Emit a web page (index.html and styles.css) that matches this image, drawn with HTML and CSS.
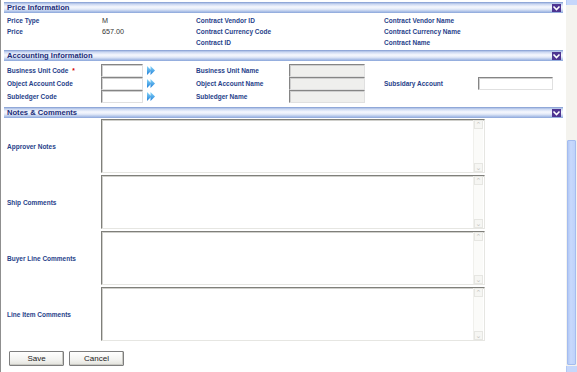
FILE: index.html
```html
<!DOCTYPE html>
<html>
<head>
<meta charset="utf-8">
<link rel="stylesheet" href="styles.css">
</head>
<body>
<div class="window">
  <div class="page">
    <div class="section-head">
      <span class="section-title">Price Information</span>
      <svg class="collapse" width="9" height="8" viewBox="0 0 9 8"><rect width="9" height="8" fill="#4e3592"/><path d="M1.5 2.5 L4.5 5.5 L7.5 2.5" fill="none" stroke="#fff" stroke-width="1.6"/></svg>
    </div>
    <div class="grid price">
      <span class="lbl">Price Type</span><span class="val">M</span><span class="lbl">Contract Vendor ID</span><span></span><span class="lbl">Contract Vendor Name</span><span></span>
      <span class="lbl">Price</span><span class="val">657.00</span><span class="lbl">Contract Currency Code</span><span></span><span class="lbl">Contract Currency Name</span><span></span>
      <span></span><span></span><span class="lbl">Contract ID</span><span></span><span class="lbl">Contract Name</span><span></span>
    </div>

    <div class="section-head">
      <span class="section-title">Accounting Information</span>
      <svg class="collapse" width="9" height="8" viewBox="0 0 9 8"><rect width="9" height="8" fill="#4e3592"/><path d="M1.5 2.5 L4.5 5.5 L7.5 2.5" fill="none" stroke="#fff" stroke-width="1.6"/></svg>
    </div>
    <div class="grid acct">
      <span class="lbl">Business Unit Code <span class="req">*</span></span>
      <span class="field"><input class="code" type="text"><svg class="go" width="8" height="9" viewBox="0 0 8 9"><defs><linearGradient id="g1" x1="0" y1="0" x2="0" y2="1"><stop offset="0" stop-color="#8ad8fb"/><stop offset="1" stop-color="#1f7fd8"/></linearGradient></defs><polygon points="0,0 4.5,4.5 0,9" fill="url(#g1)"/><polygon points="3.5,0 8,4.5 3.5,9" fill="url(#g1)"/></svg></span>
      <span class="lbl">Business Unit Name</span>
      <span class="field"><input class="name" type="text" disabled></span>
      <span></span><span></span>

      <span class="lbl">Object Account Code</span>
      <span class="field"><input class="code" type="text"><svg class="go" width="8" height="9" viewBox="0 0 8 9"><polygon points="0,0 4.5,4.5 0,9" fill="url(#g1)"/><polygon points="3.5,0 8,4.5 3.5,9" fill="url(#g1)"/></svg></span>
      <span class="lbl">Object Account Name</span>
      <span class="field"><input class="name" type="text" disabled></span>
      <span class="lbl">Subsidary Account</span>
      <span class="field"><input class="sub" type="text"></span>

      <span class="lbl">Subledger Code</span>
      <span class="field"><input class="code" type="text"><svg class="go" width="8" height="9" viewBox="0 0 8 9"><polygon points="0,0 4.5,4.5 0,9" fill="url(#g1)"/><polygon points="3.5,0 8,4.5 3.5,9" fill="url(#g1)"/></svg></span>
      <span class="lbl">Subledger Name</span>
      <span class="field"><input class="name" type="text" disabled></span>
      <span></span><span></span>
    </div>

    <div class="section-head">
      <span class="section-title">Notes &amp; Comments</span>
      <svg class="collapse" width="9" height="8" viewBox="0 0 9 8"><rect width="9" height="8" fill="#4e3592"/><path d="M1.5 2.5 L4.5 5.5 L7.5 2.5" fill="none" stroke="#fff" stroke-width="1.6"/></svg>
    </div>
    <div class="notes">
      <div class="note-row">
        <span class="lbl">Approver Notes</span>
        <div class="note-box"><textarea></textarea><div class="tscroll"><span class="tbtn">&#8963;</span><span class="tbtn">&#8964;</span></div></div>
      </div>
      <div class="note-row">
        <span class="lbl">Ship Comments</span>
        <div class="note-box"><textarea></textarea><div class="tscroll"><span class="tbtn">&#8963;</span><span class="tbtn">&#8964;</span></div></div>
      </div>
      <div class="note-row">
        <span class="lbl">Buyer Line Comments</span>
        <div class="note-box"><textarea></textarea><div class="tscroll"><span class="tbtn">&#8963;</span><span class="tbtn">&#8964;</span></div></div>
      </div>
      <div class="note-row">
        <span class="lbl">Line Item Comments</span>
        <div class="note-box"><textarea></textarea><div class="tscroll"><span class="tbtn">&#8963;</span><span class="tbtn">&#8964;</span></div></div>
      </div>
    </div>

    <div class="buttons">
      <button class="btn">Save</button>
      <button class="btn">Cancel</button>
    </div>
  </div>
  <div class="vscroll">
    <div class="vs-btn top"></div>
    <div class="vs-track"></div>
    <div class="vs-thumb"></div>
    <div class="vs-btn bottom"></div>
  </div>
</div>
</body>
</html>
```
FILE: styles.css
```css
html, body {
  margin: 0;
  padding: 0;
  background: #ffffff;
}
body {
  font-family: "Liberation Sans", Arial, sans-serif;
  width: 577px;
  height: 372px;
  overflow: hidden;
}
.window {
  display: flex;
  height: 372px;
}
.page {
  flex: 1;
  border-left: 1px solid #8f8f8f;
  padding-left: 1px;
  padding-top: 2px;
  background: #fff;
}
.section-head {
  height: 11px;
  margin: 0 3px 0 2px;
  padding: 0 2px 0 3px;
  display: flex;
  align-items: center;
  justify-content: space-between;
  background: linear-gradient(to bottom, #7d98d0 0%, #c8d6f1 18%, #f6f8fe 45%, #e3eaf8 65%, #a9bee6 88%, #8aa5da 100%);
}
.section-title {
  font-weight: bold;
  font-size: 7.6px;
  color: #1b2d78;
  line-height: 11px;
  white-space: nowrap;
}
.collapse {
  display: block;
}
.grid {
  display: grid;
  grid-template-columns: 94px 95px 93px 95px 94px 1fr;
  padding-left: 5px;
  align-items: center;
}
.price {
  grid-auto-rows: 11px;
  padding-top: 2px;
  padding-bottom: 2px;
}
.acct {
  grid-auto-rows: 13px;
  padding-top: 3px;
  padding-bottom: 4px;
}
.lbl {
  font-weight: bold;
  font-size: 6.5px;
  color: #273f8a;
  white-space: nowrap;
}
.req {
  color: #d40000;
  margin-left: 2px;
}
.val {
  font-size: 7.2px;
  color: #333;
  padding-left: 1px;
}
.field {
  display: flex;
  align-items: center;
  height: 13px;
}
input {
  box-sizing: border-box;
  height: 13px;
  margin: 0;
  padding: 0 2px;
  font-size: 7px;
  border: 1px solid;
  border-color: #858585 #e0e0e0 #e0e0e0 #858585;
  box-shadow: inset 1px 1px 0 #cfcfcf;
  background: #fff;
  outline: none;
}
input.code { width: 42px; }
input.name { width: 76px; background: #efefed; }
input.sub { width: 75px; }
.go {
  display: block;
  margin-left: 4px;
}
.notes {
  padding-top: 1px;
  padding-left: 5px;
}
.note-row {
  display: grid;
  grid-template-columns: 94px 384px;
  align-items: center;
  height: 54px;
  margin-bottom: 2px;
}
.note-box {
  box-sizing: border-box;
  height: 54px;
  display: flex;
  border: 1px solid;
  border-color: #7f7f7a #e6e6e2 #e6e6e2 #7f7f7a;
  box-shadow: inset 1px 1px 0 #d0d0cc;
  background: #fff;
}
.note-box textarea {
  flex: 1;
  border: none;
  resize: none;
  outline: none;
  background: transparent;
  margin: 0;
  padding: 2px;
  font-size: 8px;
}
.tscroll {
  width: 9px;
  margin-right: 1px;
  display: flex;
  flex-direction: column;
  justify-content: space-between;
  background: #fbfbf9;
  border-left: 1px solid #f0f0ec;
}
.tbtn {
  display: block;
  height: 9px;
  box-sizing: border-box;
  border: 1px solid #e6e6e2;
  background: #f6f6f3;
  color: #c4c4c0;
  font-size: 7px;
  line-height: 8px;
  text-align: center;
  font-family: "DejaVu Sans", sans-serif;
}
.buttons {
  display: flex;
  gap: 5px;
  padding-left: 7px;
  padding-top: 8px;
}
.btn {
  box-sizing: border-box;
  width: 55px;
  height: 15px;
  padding: 0;
  font-family: "Liberation Sans", Arial, sans-serif;
  font-size: 8px;
  color: #222;
  border: 1px solid #7e7e7e;
  border-radius: 1px;
  background: linear-gradient(to bottom, #ffffff 0%, #f3f3f0 60%, #e2e2dc 100%);
  box-shadow: inset -1px -1px 0 #c9c9c3;
}
.vscroll {
  width: 11px;
  display: flex;
  flex-direction: column;
  background: #f4f3ee;
}
.vs-btn {
  background: #c6d7fb;
  border-left: 1px solid #b3c8f3;
}
.vs-btn.top { height: 5px; }
.vs-btn.bottom { height: 6px; }
.vs-track {
  height: 135px;
}
.vs-thumb {
  flex: 1;
  margin: 0 1px 1px 1px;
  background: linear-gradient(to right, #b2c8f5, #c8d9fc 40%, #bed2fa);
  border: 1px solid #a4bcef;
  border-radius: 1px;
}
```
